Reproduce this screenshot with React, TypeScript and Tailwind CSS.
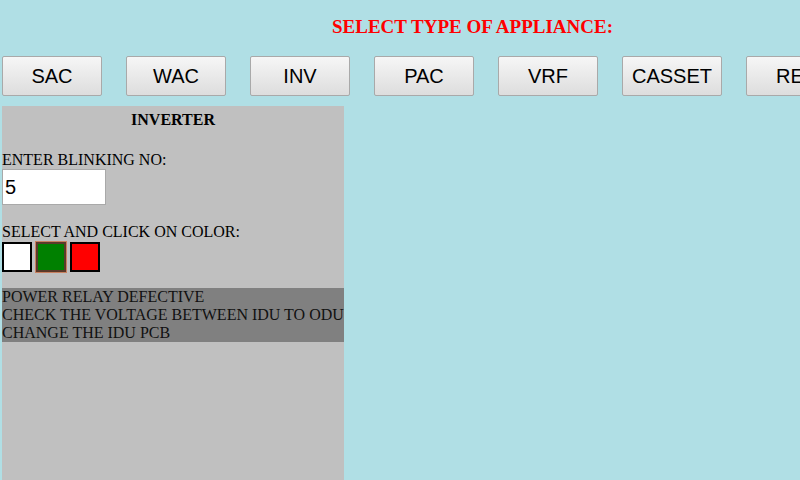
import React from 'react';

const types = ['SAC', 'WAC', 'INV', 'PAC', 'VRF', 'CASSET', 'REF'];

const serif = { fontFamily: '"Liberation Serif", "Times New Roman", serif' };

export default function App() {
  return (
    <div
      className="w-[800px] h-[480px] overflow-hidden bg-[#b0dfe5] text-black"
      style={serif}
    >
      <div className="w-[1000px]">
        <div className="h-[56px] pl-[332px] pt-[15px]">
          <h1 className="text-[19px] leading-[24px] font-bold text-[#ff0000]">
            SELECT TYPE OF APPLIANCE:
          </h1>
        </div>
        <div className="flex gap-[24px] pl-[2px] h-[50px]">
          {types.map((t) => (
            <button
              key={t}
              className="w-[100px] h-[40px] shrink-0 rounded-[2px] border border-[#a9a9a9] bg-gradient-to-b from-[#f6f6f6] to-[#dddddd] text-[20px] text-black font-['Liberation_Sans',Arial,sans-serif]"
            >
              {t}
            </button>
          ))}
        </div>
      </div>
      <div className="ml-[2px] w-[342px] h-[374px] bg-[#c0c0c0] text-[16px] leading-[18px]">
        <div className="pt-[5px] text-center font-bold">INVERTER</div>
        <div className="mt-[22px]">ENTER BLINKING NO:</div>
        <input
          defaultValue="5"
          className="block w-[104px] h-[36px] bg-white border border-[#a9a9a9] px-[2px] text-[20px] font-['Liberation_Sans',Arial,sans-serif] outline-none"
        />
        <div className="mt-[18px]">SELECT AND CLICK ON COLOR:</div>
        <div className="mt-[1px] flex gap-[4px]">
          <div className="w-[30px] h-[30px] bg-white border-2 border-black" />
          <div className="w-[30px] h-[30px] bg-[#008000] border-2 border-[#5a3a2a] outline outline-1 outline-[#c88060]" />
          <div className="w-[30px] h-[30px] bg-[#ff0000] border-2 border-black" />
        </div>
        <div className="mt-[16px] bg-[#808080] text-[#111] whitespace-nowrap">
          <div>POWER RELAY DEFECTIVE</div>
          <div>CHECK THE VOLTAGE BETWEEN IDU TO ODU</div>
          <div>CHANGE THE IDU PCB</div>
        </div>
      </div>
    </div>
  );
}
